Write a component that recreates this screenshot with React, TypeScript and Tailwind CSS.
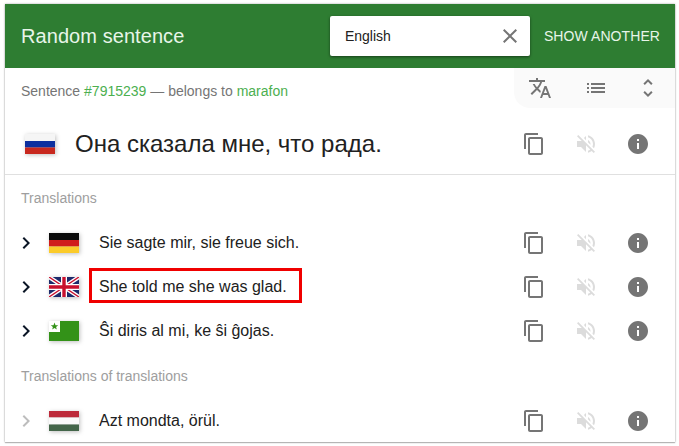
const paths = {
  copy: "M16 1H4c-1.1 0-2 .9-2 2v14h2V3h12V1zm3 4H8c-1.1 0-2 .9-2 2v14c0 1.1.9 2 2 2h11c1.1 0 2-.9 2-2V7c0-1.1-.9-2-2-2zm0 16H8V7h11v14z",
  mute: "M16.5 12c0-1.77-1.02-3.29-2.5-4.03v2.21l2.45 2.45c.03-.2.05-.41.05-.63zm2.5 0c0 .94-.2 1.82-.54 2.64l1.51 1.51C20.63 14.91 21 13.5 21 12c0-4.28-2.99-7.86-7-8.77v2.06c2.89.86 5 3.54 5 6.71zM4.27 3L3 4.27 7.73 9H3v6h4l5 5v-6.73l4.25 4.25c-.67.52-1.42.93-2.25 1.18v2.06c1.38-.31 2.63-.95 3.69-1.81L19.73 21 21 19.73l-9-9L4.27 3zM12 4L9.91 6.09 12 8.18V4z",
  info: "M12 2C6.48 2 2 6.48 2 12s4.48 10 10 10 10-4.48 10-10S17.52 2 12 2zm1 15h-2v-6h2v6zm0-8h-2V7h2v2z",
  translate: "M12.87 15.07l-2.54-2.51.03-.03c1.74-1.94 2.98-4.17 3.71-6.53H17V4h-7V2H8v2H1v1.99h11.17C11.5 7.92 10.44 9.75 9 11.35 8.07 10.32 7.3 9.19 6.69 8h-2c.73 1.63 1.73 3.17 2.98 4.56l-5.09 5.02L4 19l5-5 3.11 3.11.76-2.04zM18.5 10h-2L12 22h2l1.12-3h4.75L21 22h2l-4.5-12zm-2.62 7l1.62-4.33L19.12 17h-3.24z",
  list: "M3 13h2v-2H3v2zm0 4h2v-2H3v2zm0-8h2V7H3v2zm4 4h14v-2H7v2zm0 4h14v-2H7v2zM7 7v2h14V7H7z",
  unfold: "M12 5.83L15.17 9l1.41-1.41L12 3 7.41 7.59 8.83 9 12 5.83zm0 12.34L8.83 15l-1.41 1.41L12 21l4.59-4.59L15.17 15 12 18.17z",
  chevron: "M10 6L8.59 7.41 13.17 12l-4.58 4.59L10 18l6-6z",
  close: "M19 6.41L17.59 5 12 10.59 6.41 5 5 6.41 10.59 12 5 17.59 6.41 19 12 13.41 17.59 19 19 17.59 13.41 12z",
};

function Icon({ d, className }: { d: string; className: string }) {
  return (
    <svg viewBox="0 0 24 24" className={"h-6 w-6 shrink-0 fill-current " + className}>
      <path d={d} />
    </svg>
  );
}

function Flag({ code }: { code: string }) {
  return (
    <svg viewBox="0 0 30 20" className="h-5 w-[30px] shrink-0 drop-shadow-[1px_1px_2px_rgba(0,0,0,0.25)]">
      {code === "ru" && (
        <>
          <rect width="30" height="7" fill="#f5f5f5" />
          <rect y="7" width="30" height="6.5" fill="#0c2f9f" />
          <rect y="13.5" width="30" height="6.5" fill="#c8281e" />
        </>
      )}
      {code === "de" && (
        <>
          <rect width="30" height="7" fill="#0a0a0a" />
          <rect y="7" width="30" height="6.5" fill="#d01c1c" />
          <rect y="13.5" width="30" height="6.5" fill="#fbcb2a" />
        </>
      )}
      {code === "gb" && (
        <>
          <rect width="30" height="20" fill="#1c2a6b" />
          <path d="M0 0L30 20M30 0L0 20" stroke="#fff" strokeWidth="4" />
          <path d="M0 0L30 20M30 0L0 20" stroke="#c8102e" strokeWidth="1.4" />
          <path d="M15 0V20M0 10H30" stroke="#fff" strokeWidth="6" />
          <path d="M15 0V20M0 10H30" stroke="#c8102e" strokeWidth="3.4" />
        </>
      )}
      {code === "eo" && (
        <>
          <rect width="30" height="20" fill="#339218" />
          <rect width="11" height="11" fill="#fff" />
          <path d="M5.5 1.6l1 2.6 2.7.1-2.1 1.7.7 2.6-2.3-1.5-2.3 1.5.7-2.6-2.1-1.7 2.7-.1z" fill="#339218" />
        </>
      )}
      {code === "hu" && (
        <>
          <rect width="30" height="6.5" fill="#bd2a3a" />
          <rect y="6.5" width="30" height="7" fill="#fafafa" />
          <rect y="13.5" width="30" height="6.5" fill="#44664a" />
        </>
      )}
    </svg>
  );
}

function Actions() {
  return (
    <div className="flex shrink-0 pr-[11px]">
      <div className="flex w-[52px] justify-center"><Icon d={paths.copy} className="text-[#757575]" /></div>
      <div className="flex w-[52px] justify-center"><Icon d={paths.mute} className="text-[#dcdcdc]" /></div>
      <div className="flex w-[52px] justify-center"><Icon d={paths.info} className="text-[#757575]" /></div>
    </div>
  );
}

function Row({ code, text, muted, boxed }: { code: string; text: string; muted?: boolean; boxed?: boolean }) {
  return (
    <div className="flex h-11 items-center">
      <Icon d={paths.chevron} className={"ml-[9px] " + (muted ? "text-[#bdbdbd]" : "text-[#0b1626]")} />
      <div className="ml-[11px]"><Flag code={code} /></div>
      <div className="relative ml-5 flex-1 text-[16px] text-[#212121]">
        <span className="relative">
          {text}
          {boxed && <span className="absolute -top-[10px] -bottom-[8px] -left-[10px] -right-[15px] border-[3px] border-[#f00000]" />}
        </span>
      </div>
      <Actions />
    </div>
  );
}

export default function App() {
  return (
    <div className="h-[446px] w-[679px] overflow-hidden bg-white px-[5px] pt-1 font-['Liberation_Sans',Arial,sans-serif]">
      <div className="h-[438px] w-[670px] bg-white shadow-[0_0_2px_rgba(0,0,0,0.35),0_1px_1px_rgba(0,0,0,0.2)]">
        <header className="flex h-16 items-center bg-[#2e7d32] pl-4 pr-[15px]">
          <div className="flex-1 text-[20px] tracking-[0.07px] text-[#e8f5e9]">Random sentence</div>
          <div className="flex h-10 w-[200px] items-center justify-between rounded-[2px] bg-white pl-[15px] pr-2 shadow-[0_1px_3px_rgba(0,0,0,0.5)]">
            <span className="text-[14px] text-[#212121]">English</span>
            <Icon d={paths.close} className="text-[#757575]" />
          </div>
          <div className="ml-[14px] text-[14px] tracking-[0.08px] text-[#e8f5e9]">SHOW ANOTHER</div>
        </header>

        <div className="flex h-10 items-start justify-between">
          <div className="pl-4 pt-[15px] text-[14px] leading-4 text-[#757575]">
            Sentence <span className="text-[#4caf50]">#7915239</span> — belongs to <span className="text-[#4caf50]">marafon</span>
          </div>
          <div className="flex h-10 w-[161px] items-center rounded-bl-2xl bg-[#fafafa] pl-[14px]">
            <Icon d={paths.translate} className="text-[#757575]" />
            <Icon d={paths.list} className="ml-8 text-[#757575]" />
            <Icon d={paths.unfold} className="ml-7 text-[#757575]" />
          </div>
        </div>

        <div className="flex h-[67px] items-center border-b border-[#e0e0e0] pt-[6px]">
          <div className="ml-5"><Flag code="ru" /></div>
          <div className="ml-5 flex-1 text-[24px] text-[#212121]">Она сказала мне, что рада.</div>
          <Actions />
        </div>

        <div className="pl-4 pt-[15px] text-[14px] leading-4 text-[#9e9e9e]">Translations</div>
        <div className="pt-[15px]">
          <Row code="de" text="Sie sagte mir, sie freue sich." />
          <Row code="gb" text="She told me she was glad." boxed />
          <Row code="eo" text="Ŝi diris al mi, ke ŝi ĝojas." />
        </div>
        <div className="pl-4 pt-[15px] text-[14px] leading-4 text-[#9e9e9e]">Translations of translations</div>
        <div className="pt-[15px]">
          <Row code="hu" text="Azt mondta, örül." muted />
        </div>
      </div>
    </div>
  );
}
